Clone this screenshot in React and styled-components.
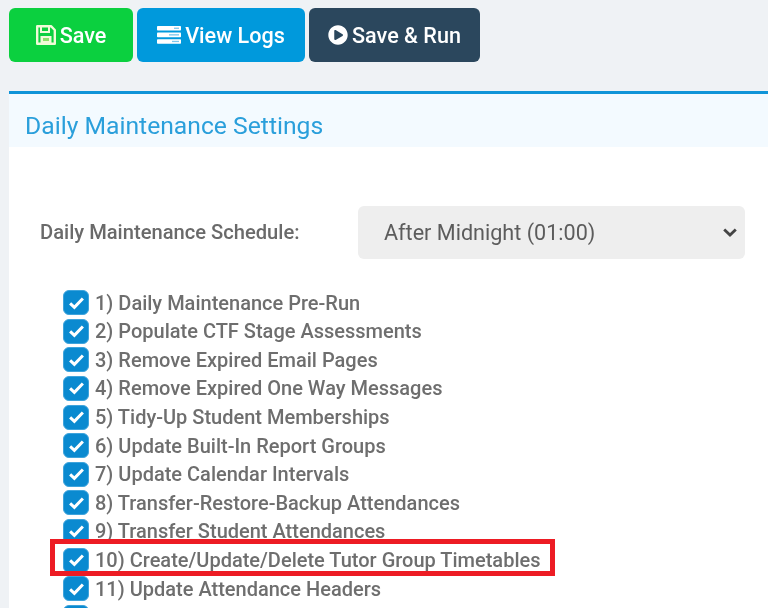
import React from 'react';
import styled, { createGlobalStyle } from 'styled-components';
import { FaPlayCircle } from 'react-icons/fa';

const tasks = [
    '1) Daily Maintenance Pre-Run',
    '2) Populate CTF Stage Assessments',
    '3) Remove Expired Email Pages',
    '4) Remove Expired One Way Messages',
    '5) Tidy-Up Student Memberships',
    '6) Update Built-In Report Groups',
    '7) Update Calendar Intervals',
    '8) Transfer-Restore-Backup Attendances',
    '9) Transfer Student Attendances',
    '10) Create/Update/Delete Tutor Group Timetables',
    '11) Update Attendance Headers',
    '',
];

const SaveIcon = () => (
    <svg width="20" height="20" viewBox="0 0 20 20" fill="none">
        <path d="M1.2 1.2H15L18.8 5V18.8H1.2Z" stroke="#f1fbd8" strokeWidth="2.4" strokeLinejoin="round" />
        <path d="M5 2V7H13V2" stroke="#f1fbd8" strokeWidth="2" />
        <rect x="4.5" y="11" width="11" height="7" fill="#f1fbd8" />
        <rect x="7" y="13" width="6" height="3" fill="#8ce06a" />
    </svg>
);

const LogsIcon = () => (
    <svg width="24" height="18" viewBox="0 0 24 18">
        <rect y="0" width="24" height="4.6" rx="0.8" fill="#fff" />
        <rect y="6.6" width="24" height="4.6" rx="0.8" fill="#fff" />
        <rect y="13.2" width="24" height="4.6" rx="0.8" fill="#fff" />
        <rect x="17" y="1.6" width="5" height="1.3" fill="#7cc6ec" />
        <rect x="12" y="8.2" width="10" height="1.3" fill="#7cc6ec" />
        <rect x="15" y="14.8" width="7" height="1.3" fill="#7cc6ec" />
    </svg>
);

const CheckIcon = () => (
    <svg width="17" height="14" viewBox="0 0 16 13" fill="none">
        <path d="M2 6.8L6 10.6L14 2.2" stroke="#fff" strokeWidth="2.8" />
    </svg>
);

const ChevronIcon = () => (
    <svg width="14" height="9" viewBox="0 0 14 9" fill="none">
        <path d="M1.2 1.4L7 7L12.8 1.4" stroke="#444" strokeWidth="2.8" />
    </svg>
);

export default function App() {
    return (
        <Page>
            <GlobalStyle />
            <Toolbar>
                <ActionButton $bg="#0bd03f" $width={124}><SaveIcon />Save</ActionButton>
                <ActionButton $bg="#0099dc" $width={168}><LogsIcon />View Logs</ActionButton>
                <ActionButton $bg="#2b475d" $width={171}><FaPlayCircle size={20} />Save &amp; Run</ActionButton>
            </Toolbar>
            <Panel>
                <PanelHeader>Daily Maintenance Settings</PanelHeader>
                <PanelBody>
                    <ScheduleRow>
                        <ScheduleLabel>Daily Maintenance Schedule:</ScheduleLabel>
                        <ScheduleSelect>
                            After Midnight (01:00)
                            <ChevronIcon />
                        </ScheduleSelect>
                    </ScheduleRow>
                    <TaskList>
                        {tasks.map((task, i) => (
                            <TaskRow key={i}>
                                <CheckBox><CheckIcon /></CheckBox>
                                {task}
                                {i === 9 && <Highlight />}
                            </TaskRow>
                        ))}
                    </TaskList>
                </PanelBody>
            </Panel>
        </Page>
    );
}

const GlobalStyle = createGlobalStyle`
    html, body {
        margin: 0;
        height: 608px;
        overflow: hidden;
        background: #eff2f5;
    }
`;

const Page = styled.div`
    font-family: Roboto, "Liberation Sans", sans-serif;
    padding: 8px 0 0 9px;
    height: 600px;
    overflow: hidden;
    filter: blur(0.4px);
`;

const Toolbar = styled.div`
    display: flex;
    gap: 4px;
`;

const ActionButton = styled.div`
    display: flex;
    align-items: center;
    justify-content: center;
    gap: 4px;
    width: ${p => p.$width}px;
    height: 54px;
    box-sizing: border-box;
    border-radius: 6px;
    background: ${p => p.$bg};
    color: #fff;
    font-size: 21.6px;
    font-weight: 500;
`;

const Panel = styled.div`
    margin-top: 29px;
    border-top: 3px solid #0f94d8;
    background: #fff;
`;

const PanelHeader = styled.div`
    height: 53px;
    box-sizing: border-box;
    padding: 16px 0 0 16px;
    background: #f3faff;
    color: #2a9fdb;
    font-size: 24.7px;
    line-height: 32px;
`;

const PanelBody = styled.div`
    padding: 59px 23px 0 31px;
`;

const ScheduleRow = styled.div`
    display: flex;
    align-items: center;
    justify-content: space-between;
`;

const ScheduleLabel = styled.div`
    position: relative;
    top: -1px;
    color: #6a6a6a;
    font-size: 20.15px;
    font-weight: 500;
`;

const ScheduleSelect = styled.div`
    display: flex;
    align-items: center;
    justify-content: space-between;
    width: 387px;
    height: 53px;
    box-sizing: border-box;
    padding: 0 8px 0 26px;
    border-radius: 6px;
    background: #eee;
    color: #5c5c5c;
    font-size: 21.6px;
`;

const TaskList = styled.div`
    margin: 29.4px 0 0 23px;
    display: flex;
    flex-direction: column;
`;

const TaskRow = styled.div`
    position: relative;
    display: flex;
    align-items: center;
    gap: 6px;
    height: 28.6px;
    color: #6e6e6e;
    font-size: 20px;
    font-weight: 500;
    white-space: nowrap;
`;

const CheckBox = styled.span`
    display: flex;
    align-items: center;
    justify-content: center;
    width: 26px;
    height: 25px;
    box-sizing: border-box;
    border: 1px solid #3fa4dc;
    border-radius: 6px;
    background: #0a8ad0;
`;

const Highlight = styled.span`
    position: absolute;
    left: -13px;
    top: -6.4px;
    width: 505px;
    height: 37px;
    box-sizing: border-box;
    border: 5px solid #ed1c24;
`;
